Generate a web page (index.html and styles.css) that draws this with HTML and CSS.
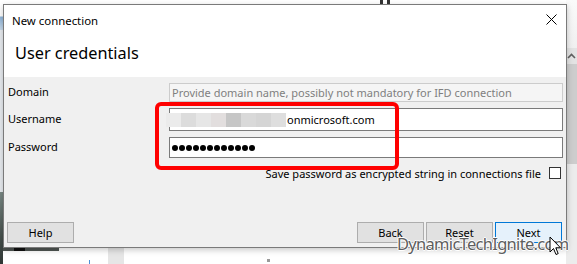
FILE: index.html
```html
<!DOCTYPE html>
<html lang="en">
<head>
<meta charset="utf-8">
<title>New connection</title>
<link rel="stylesheet" href="styles.css">
</head>
<body>
<div class="desk">
  <div class="desk-left">
    <div class="dl-blue"></div>
    <div class="dl-fill"></div>
    <div class="dl-photo"></div>
  </div>
  <div class="desk-main">
    <div class="top-strip"><span class="top-glyph"></span></div>
    <div class="main-fill"></div>
    <div class="bottom-strip">
      <div class="bs-photo"><span class="bs-black"></span></div>
      <div class="bs-white"><span class="bs-mark blue"></span></div>
      <div class="bs-grey"></div>
      <div class="bs-white wide"><span class="bs-mark grey"></span></div>
    </div>
  </div>
  <div class="scroll">
    <div class="sc-top"></div>
    <div class="sc-arrow">
      <svg width="9" height="6" viewBox="0 0 9 6"><path d="M1 5 L4.5 1.5 L8 5" fill="none" stroke="#606060" stroke-width="1.6"/></svg>
    </div>
    <div class="sc-thumb"></div>
    <div class="sc-rest"></div>
  </div>
</div>

<div class="dialog">
  <div class="header">
    <div class="titlebar">
      <span class="title">New connection</span>
      <svg class="close" width="11" height="11" viewBox="0 0 11 11"><path d="M0.5 0.5 L10.5 10.5 M10.5 0.5 L0.5 10.5" stroke="#000" stroke-width="1"/></svg>
    </div>
    <div class="heading">User credentials</div>
  </div>
  <div class="content">
    <div class="fields">
      <div class="label">Domain</div>
      <div class="field disabled"><span class="placeholder">Provide domain name, possibly not mandatory for IFD connection</span></div>
      <div class="label">Username</div>
      <div class="field">
        <span class="blur">
          <i style="background:#ebebeb"></i><i style="background:#dcdcdc"></i><i style="background:#e6e6e6"></i><i style="background:#e2dede"></i><i style="background:#c6c6c6"></i><i style="background:#d9d9d9"></i><i style="background:#d5d5d5"></i><i style="background:#dedede"></i>
        </span>
        <span class="value">onmicrosoft.com</span>
      </div>
      <div class="label">Password</div>
      <div class="field">
        <span class="dots"><i></i><i></i><i></i><i></i><i></i><i></i><i></i><i></i><i></i><i></i><i></i><i></i></span>
      </div>
    </div>
    <div class="check-row">
      <span>Save password as encrypted string in connections file</span>
      <span class="checkbox"></span>
    </div>
    <div class="spacer"></div>
    <div class="buttons">
      <div class="btn">Help</div>
      <div class="btn-group">
        <div class="btn">Back</div>
        <div class="btn">Reset</div>
        <div class="btn primary">Next</div>
      </div>
    </div>
  </div>
</div>

<div class="highlight"></div>
<div class="watermark">DynamicTechIgnite.com</div>
<svg class="cursor" width="13" height="21" viewBox="0 0 13 21"><path d="M1 1 L1 16 L4.5 12.5 L7 18.5 L9.2 17.6 L6.8 11.8 L11.5 11.8 Z" fill="#fff" stroke="#000" stroke-width="1" stroke-linejoin="miter"/></svg>
</body>
</html>
```

FILE: styles.css
```css
* { box-sizing: border-box; }
html, body {
  margin: 0;
  padding: 0;
  width: 577px;
  height: 264px;
  overflow: hidden;
  background: #ffffff;
  font-family: "Noto Sans", "Open Sans", "Liberation Sans", sans-serif;
  font-size: 11px;
  color: #000;
}

/* background application behind the dialog */
.desk {
  display: grid;
  grid-template-columns: 3px 1fr 11px;
  width: 577px;
  height: 264px;
}
.desk-left { display: flex; flex-direction: column; }
.dl-blue { height: 30px; background: linear-gradient(#ffffff 0, #ffffff 16px, #8fb4d8 17px, #c9dbec 30px); }
.dl-fill { flex: 1; background: #e8ecf0; }
.dl-photo { height: 72px; background: linear-gradient(#7b8a86, #49534f 60%, #2f3634); }

.desk-main { display: flex; flex-direction: column; }
.top-strip { height: 4px; background: #fff; overflow: hidden; }
.top-glyph { display: block; margin-left: 374px; width: 16px; height: 4px; background: linear-gradient(90deg, transparent 0 3px, #333 3px 6px, transparent 6px 10px, #333 10px 13px, transparent 13px); }
.main-fill { flex: 1; background: #fff; }
.bottom-strip { height: 17px; display: flex; background: #fff; }
.bs-photo { width: 56px; height: 4px; background: #4f5552; }
.bs-black { display: block; margin-left: 11px; width: 11px; height: 4px; background: #111; }
.bs-white { width: 49px; }
.bs-white.wide { flex: 1; }
.bs-grey { width: 16px; background: #e6e6e6; }
.bs-mark { display: block; width: 1px; height: 4px; margin-top: 13px; }
.bs-mark.blue { margin-left: 30px; background: #4a90d9; }
.bs-mark.grey { margin-left: 143px; background: #9a9a9a; width: 3px; height: 3px; margin-top: 12px; }

.scroll { display: flex; flex-direction: column; }
.sc-top { height: 48px; background: linear-gradient(#fafafa, #f0f0f0); }
.sc-arrow { height: 16px; background: #e3e3e3; display: flex; align-items: center; justify-content: center; }
.sc-thumb { height: 100px; background: #cdcdcd; }
.sc-rest { flex: 1; background: #ececec; }

/* dialog window */
.dialog {
  position: absolute;
  left: 3px;
  top: 4px;
  width: 564px;
  height: 244px;
  border: 1px solid #7a7a7a;
  display: flex;
  flex-direction: column;
  box-shadow: 0 2px 6px rgba(0, 0, 0, 0.22);
  background: #f0f0f0;
}
.header {
  height: 72px;
  background: #ffffff;
  flex: none;
}
.titlebar {
  height: 30px;
  display: flex;
  align-items: center;
  justify-content: space-between;
  padding: 0 9px 0 8px;
}
.title { font-size: 11.4px; }
.close { display: block; margin-top: -1px; }
.heading {
  margin-top: 6px;
  padding-left: 11px;
  font-size: 16.3px;
  line-height: 24px;
}

.content {
  flex: 1;
  display: flex;
  flex-direction: column;
  padding: 6px 3px 4px 4px;
}
.fields {
  display: grid;
  grid-template-columns: 161px 1fr;
  grid-template-rows: 19px 23px 21px;
  row-gap: 6px;
}
.label { display: flex; align-items: center; padding-bottom: 2px; }
.field {
  border: 1px solid #7a7a7a;
  background: #ffffff;
  display: flex;
  align-items: center;
  padding-left: 2px;
  white-space: nowrap;
}
.field.disabled { border-color: #cccccc; background: #f5f5f5; }
.placeholder { color: #7f7f7f; }
.blur { display: flex; margin-left: -6px; height: 14px; }
.blur i { display: block; width: 15px; height: 14px; }
.value { margin-left: 1px; }
.dots { display: flex; gap: 1px; }
.dots i { display: block; width: 6px; height: 6px; border-radius: 50%; background: #000; }

.check-row {
  margin-top: 9px;
  height: 12px;
  display: flex;
  justify-content: flex-end;
  align-items: center;
  gap: 8px;
  padding-right: 2px;
}
.checkbox {
  width: 12px;
  height: 12px;
  border: 1px solid #333333;
  background: #ffffff;
}
.spacer { flex: 1; }
.buttons {
  display: flex;
  justify-content: space-between;
  margin-left: -1px;
  margin-right: 1px;
}
.btn-group { display: flex; gap: 2px; }
.btn {
  width: 67px;
  height: 21px;
  border: 1px solid #adadad;
  background: #e1e1e1;
  display: flex;
  align-items: center;
  justify-content: center;
}
.btn.primary { border-color: #0078d7; background: #e5f1fb; }

/* annotations over the screenshot */
.highlight {
  position: absolute;
  left: 155px;
  top: 102px;
  width: 244px;
  height: 68px;
  border: 4px solid #ff0000;
  border-radius: 6px;
}
.watermark {
  position: absolute;
  left: 397px;
  top: 233px;
  font-size: 16.5px;
  line-height: 22px;
  color: #5e5e5e;
  text-shadow: 1px 0 0 #fff, -1px 0 0 #fff, 0 1px 0 #fff, 0 -1px 0 #fff;
  letter-spacing: -0.7px;
  white-space: nowrap;
}
.cursor { position: absolute; left: 549px; top: 236px; }
```
